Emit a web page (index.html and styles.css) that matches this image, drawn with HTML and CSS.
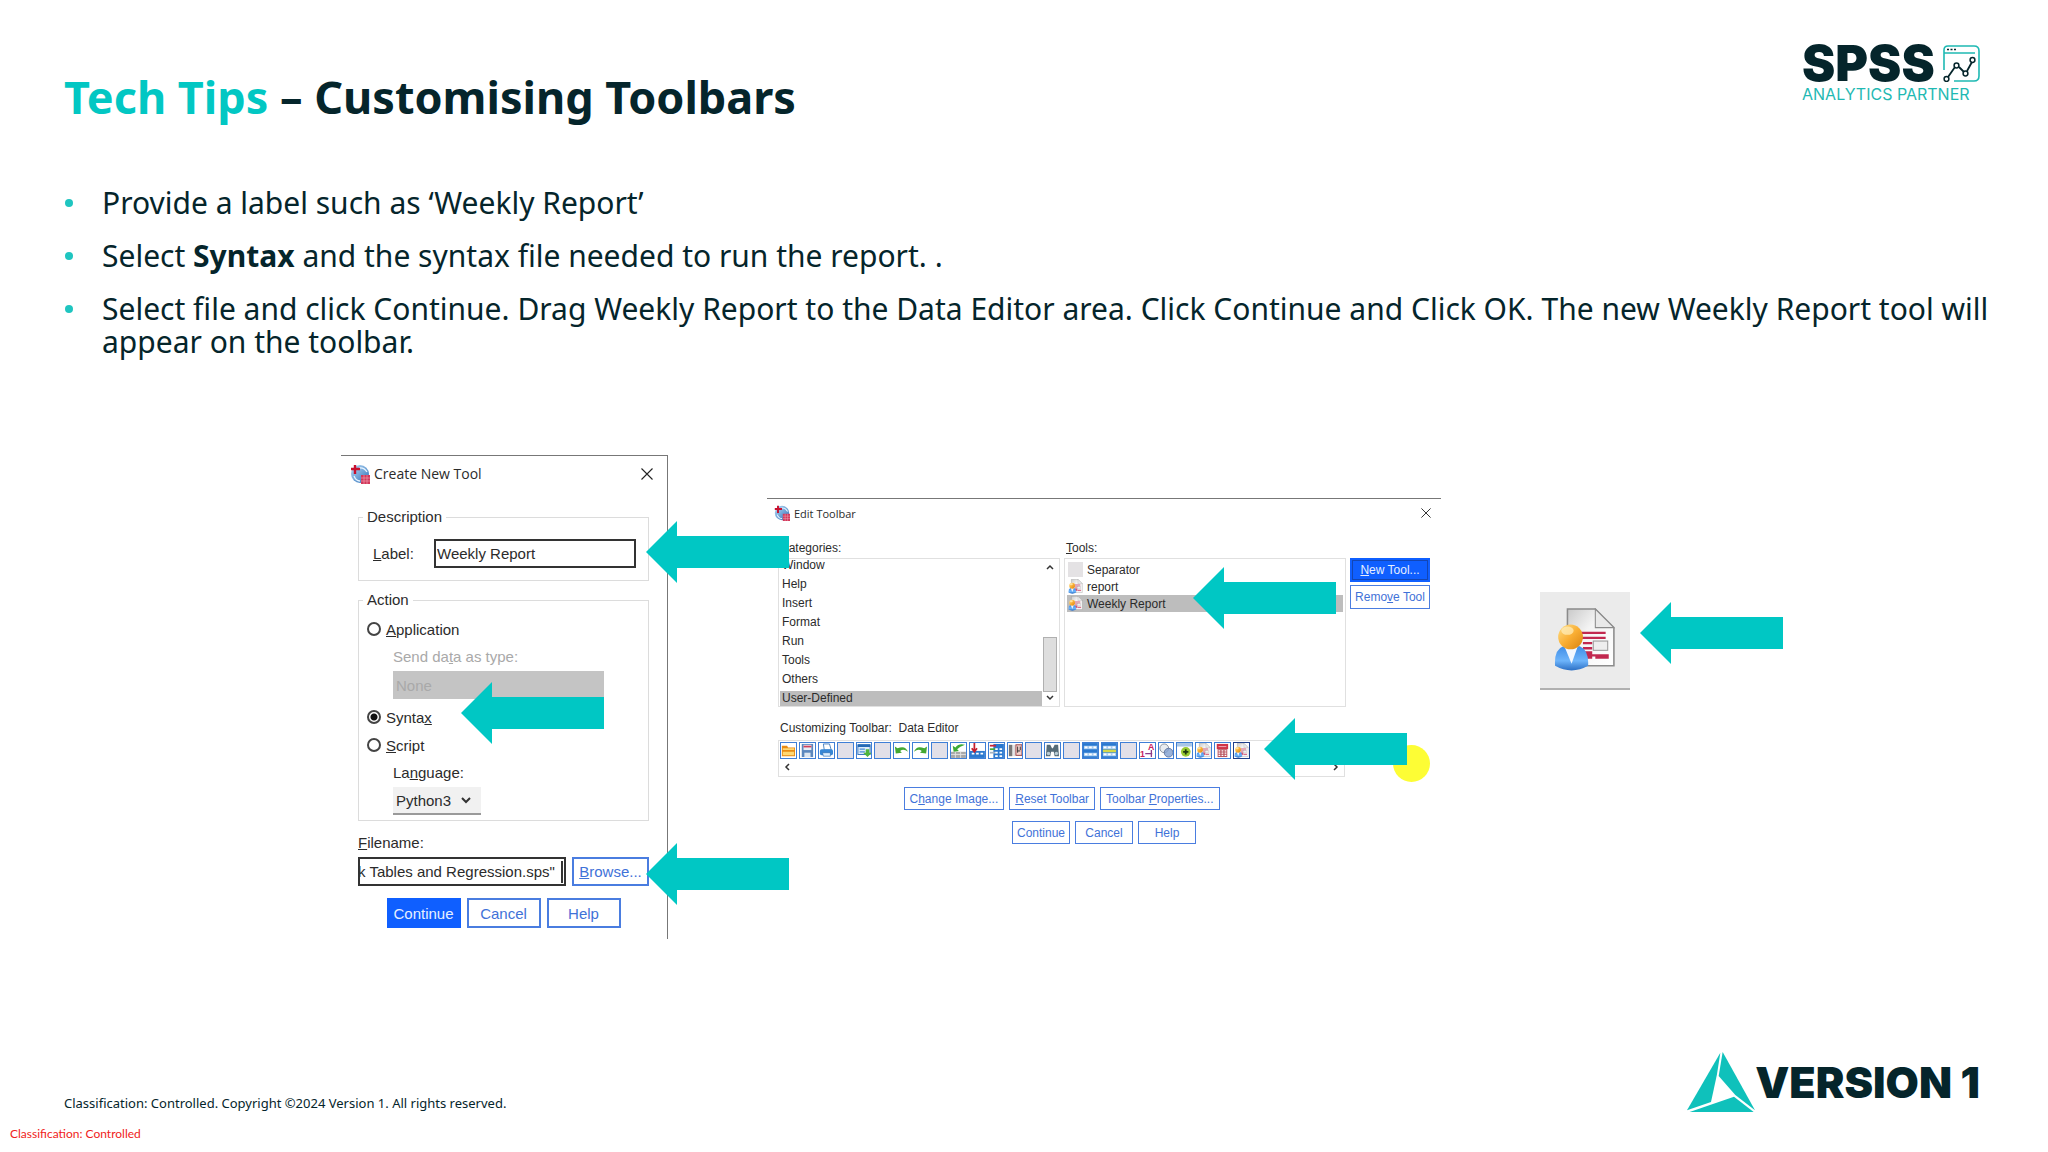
FILE: index.html
```html
<!DOCTYPE html>
<html lang="en">
<head>
    <meta charset="UTF-8">
    <meta name="viewport" content="width=device-width, initial-scale=1.0">
    <title>Tech Tips – Customising Toolbars</title>
    <link rel="stylesheet" href="styles.css">
</head>
<body>
    <!-- shared icons -->
    <svg class="defs" width="0" height="0" aria-hidden="true">
        <defs>
            <linearGradient id="gHead" x1="0" y1="0" x2="1" y2="1">
                <stop offset="0" stop-color="#ffe08a"/>
                <stop offset="0.5" stop-color="#f9ae33"/>
                <stop offset="1" stop-color="#d9820f"/>
            </linearGradient>
            <linearGradient id="gBody" x1="0" y1="0" x2="0" y2="1">
                <stop offset="0" stop-color="#3f8de6"/>
                <stop offset="0.6" stop-color="#6db4fb"/>
                <stop offset="1" stop-color="#2c6fc4"/>
            </linearGradient>
            <linearGradient id="gPage" x1="0" y1="0" x2="1" y2="1">
                <stop offset="0" stop-color="#c9c9c9"/>
                <stop offset="0.4" stop-color="#f4f4f4"/>
                <stop offset="1" stop-color="#ffffff"/>
            </linearGradient>
            <linearGradient id="gGlobe" x1="0" y1="0" x2="1" y2="1">
                <stop offset="0" stop-color="#b9dcf7"/>
                <stop offset="1" stop-color="#2d6fb8"/>
            </linearGradient>
        </defs>
        <symbol id="arrow" viewBox="0 0 143 62">
            <polygon points="0,31 31,0 31,15 143,15 143,47 31,47 31,62"/>
        </symbol>
        <symbol id="close" viewBox="0 0 12 12">
            <path d="M.5 .5l11 11M11.5 .5l-11 11" fill="none" stroke="#222" stroke-width="1.1"/>
        </symbol>
        <symbol id="app" viewBox="0 0 20 20">
            <circle cx="10" cy="10" r="9" fill="url(#gGlobe)"/>
            <path d="M9 4q5-1 8 4M4 12q2 5 6 5" stroke="#e8f4ff" stroke-width="1.3" fill="none"/>
            <path d="M5 1v9M1 5h9" stroke="#c8102e" stroke-width="2.4"/>
            <rect x="11" y="11" width="9" height="9" fill="#d2385a"/>
            <path d="M11 14h9M11 17h9M14 11v9M17 11v9" stroke="#f2a8b8" stroke-width=".6"/>
        </symbol>
        <symbol id="user-report" viewBox="0 0 60 62">
            <path d="M13 1h27l18 18v37H13z" fill="url(#gPage)" stroke="#8b8b8b" stroke-width="1.5"/>
            <path d="M40 1v18h18z" fill="#e9e9e9" stroke="#8b8b8b"/>
            <path d="M26 24h24M26 29h24M28 34h9M28 39h9M28 43h9M26 48h11M40 48h13M28 44h9M28 46h25" stroke="#c2284f" stroke-width="2.2" fill="none"/>
            <rect x="38" y="32" width="14" height="9" fill="#eee" stroke="#999"/>
            <path d="M1 56Q0 40 9 37h16q9 4 8 19-16 9-32 0z" fill="url(#gBody)"/>
            <path d="M10 37h13l-6 17z" fill="#f3f8ff"/>
            <circle cx="16" cy="28" r="12" fill="url(#gHead)"/>
            <ellipse cx="13" cy="22" rx="6" ry="4" fill="#ffefbf" opacity=".7"/>
        </symbol>
        <symbol id="grid-blue" viewBox="0 0 17 17">
            <rect width="17" height="17" fill="#2a78cf"/>
            <path d="M1 5h15M1 13h15" stroke="#a9cdf2" stroke-width="4"/>
            <path d="M2 5h3M7 5h3M12 5h3M2 13h3M7 13h3M12 13h3" stroke="#ffffff" stroke-width="2"/>
        </symbol>
        <symbol id="undo" viewBox="0 0 17 17">
            <path d="M1 4l1 8 7-1-2-2q4-3 9 1-3-8-12-4z" fill="#43a832"/>
        </symbol>
    </svg>

    <main class="slide">
        <header class="slide-header">
            <h1><span>Tech Tips</span> – Customising Toolbars</h1>
            <div class="partner-logo">
                <div class="partner-top">
                    <span>SPSS</span>
                    <svg width="37" height="37" viewBox="0 0 37 37" fill="none">
                        <path d="M1 15v-10q0-4 4-4h26q5 0 5 5v25q0 5-5 5H11M1 8h31M1 12v13" stroke="#1fb9b3" stroke-width="1.6"/>
                        <path d="M4 4.500h2M7.500 4.500h2M11 4.500h2" stroke="#05252b" stroke-width="1.4"/>
                        <path d="M5 32l7-10M16 22l5 5M24 26l5-9" stroke="#05252b" stroke-width="1.8"/>
                        <circle cx="3.500" cy="34" r="2.400" stroke="#05252b" stroke-width="1.5"/>
                        <circle cx="13.500" cy="20.500" r="2.400" stroke="#05252b" stroke-width="1.5"/>
                        <circle cx="22.500" cy="28.500" r="2.400" stroke="#05252b" stroke-width="1.5"/>
                        <circle cx="29.500" cy="15" r="2.400" stroke="#05252b" stroke-width="1.5"/>
                    </svg>
                </div>
                <div class="partner-sub">ANALYTICS PARTNER</div>
            </div>
        </header>

        <ul class="steps">
            <li>Provide a label such as ‘Weekly Report’</li>
            <li>Select <b>Syntax</b> and the syntax file needed to run the report. .</li>
            <li>Select file and click Continue. Drag Weekly Report to the Data Editor area. Click Continue and Click OK. The new Weekly Report tool will appear on the toolbar.</li>
        </ul>

        <section class="stage">
            <form class="dialog create-tool">
                <div class="titlebar">
                    <svg width="20" height="20"><use href="#app"/></svg>
                    <h2>Create New Tool</h2>
                    <button type="button" class="close" aria-label="Close"><svg width="12" height="12"><use href="#close"/></svg></button>
                </div>
                <fieldset class="description">
                    <legend>Description</legend>
                    <div class="label-row">
                        <label for="toolLabel"><u>L</u>abel:</label>
                        <input type="text" id="toolLabel" class="field" value="Weekly Report">
                    </div>
                </fieldset>
                <fieldset class="action">
                    <legend>Action</legend>
                    <label class="radio"><input type="radio" name="action"><span><u>A</u>pplication</span></label>
                    <div class="sub disabled">
                        <label for="dataType">Send da<u>t</u>a as type:</label>
                        <select id="dataType" disabled><option>None</option></select>
                    </div>
                    <label class="radio syntax"><input type="radio" name="action" checked><span>Synta<u>x</u></span></label>
                    <label class="radio"><input type="radio" name="action"><span><u>S</u>cript</span></label>
                    <div class="sub">
                        <label for="language">La<u>n</u>guage:</label>
                        <select id="language" class="language"><option>Python3</option></select>
                    </div>
                </fieldset>
                <label class="file-label" for="filename"><u>F</u>ilename:</label>
                <div class="file-row">
                    <div class="file-box">
                        <input type="text" id="filename" value="k Tables and Regression.sps&quot;">
                    </div>
                    <button type="button" class="btn"><u>B</u>rowse...</button>
                </div>
                <div class="actions">
                    <button type="button" class="btn primary">Continue</button>
                    <button type="button" class="btn">Cancel</button>
                    <button type="button" class="btn">Help</button>
                </div>
                <svg class="arrow to-label"><use href="#arrow"/></svg>
                <svg class="arrow to-syntax"><use href="#arrow"/></svg>
                <svg class="arrow to-browse"><use href="#arrow"/></svg>
            </form>

            <form class="dialog edit-toolbar">
                <div class="titlebar">
                    <svg width="16" height="16"><use href="#app"/></svg>
                    <h2>Edit Toolbar</h2>
                    <button type="button" class="close" aria-label="Close"><svg width="10" height="10"><use href="#close"/></svg></button>
                </div>
                <div class="dialog-body">
                    <div class="columns">
                        <div class="column">
                            <label for="categories"><u>C</u>ategories:</label>
                            <div class="list categories">
                                <select id="categories" size="8">
                                    <option>Window</option>
                                    <option>Help</option>
                                    <option>Insert</option>
                                    <option>Format</option>
                                    <option>Run</option>
                                    <option>Tools</option>
                                    <option>Others</option>
                                    <option selected>User-Defined</option>
                                </select>
                                <div class="scrollbar">
                                    <svg width="8" height="6" viewBox="0 0 8 6"><path d="M1 5l3-3 3 3"/></svg>
                                    <div class="thumb"></div>
                                    <svg width="8" height="6" viewBox="0 0 8 6"><path d="M1 1l3 3 3-3"/></svg>
                                </div>
                            </div>
                        </div>
                        <div class="column">
                            <div class="column-label" id="toolsLabel"><u>T</u>ools:</div>
                            <ul class="list tools" role="listbox" aria-labelledby="toolsLabel">
                                <li role="option"><span class="separator"></span>Separator</li>
                                <li role="option"><svg width="15" height="15"><use href="#user-report"/></svg>report</li>
                                <li role="option" aria-selected="true" class="selected"><svg width="15" height="15"><use href="#user-report"/></svg>Weekly Report</li>
                            </ul>
                        </div>
                        <div class="side-buttons">
                            <button type="button" class="btn primary"><u>N</u>ew Tool...</button>
                            <button type="button" class="btn">Remo<u>v</u>e Tool</button>
                        </div>
                    </div>
                    <div class="customizing">Customizing Toolbar:&nbsp; Data Editor</div>
                    <div class="toolbar">
                        <div class="toolbar-icons">
                            <button type="button" aria-label="Open"><svg viewBox="0 0 17 17"><path d="M1 3h6l1 2h8v10H1z" fill="#e98b12"/><path d="M2 6h13v2H2zM2 10h13v4H2z" fill="#ffd873"/></svg></button>
                            <button type="button" aria-label="Save"><svg viewBox="0 0 17 17"><rect x="2" y="1" width="13" height="15" fill="#5b87bd"/><rect x="4" y="2" width="9" height="6" fill="#e8edf4"/><path d="M4 4h9" stroke="#d0405a" stroke-width="2"/><rect x="5" y="11" width="7" height="5" fill="#dde6f0"/></svg></button>
                            <button type="button" aria-label="Print"><svg viewBox="0 0 17 17"><path d="M5 1h7l2 7H6z" fill="#fff" stroke="#3976b8"/><rect x="1" y="7" width="15" height="7" rx="2" fill="#3687d6"/><path d="M4 11h9v4H5z" fill="#dceeff" stroke="#2a66a8" stroke-width=".7"/></svg></button>
                            <span class="gap"></span>
                            <button type="button" aria-label="Recall dialogs"><svg viewBox="0 0 17 17"><rect x="1" y="2" width="14" height="11" fill="#dcebfa" stroke="#2469b5"/><path d="M1 3h14" stroke="#2469b5" stroke-width="3"/><path d="M3 7h6M3 10h6" stroke="#4b8dd4" stroke-width="1.5"/><path d="M10 7h4v4h3l-5 5-5-5h3z" fill="#4fb53a"/></svg></button>
                            <span class="gap"></span>
                            <button type="button" aria-label="Undo"><svg viewBox="0 0 17 17"><use href="#undo"/></svg></button>
                            <button type="button" aria-label="Redo"><svg viewBox="0 0 17 17"><use href="#undo" transform="matrix(-1 0 0 1 17 0)"/></svg></button>
                            <span class="gap"></span>
                            <button type="button" aria-label="Go to case"><svg viewBox="0 0 17 17"><rect y="10" width="17" height="7" fill="#a8a8a8"/><path d="M0 13h17M5 10v7M11 10v7" stroke="#e5e5e5"/><path d="M2 3l1 7 6-1-2-2q3-3 9-5-7-2-11 3z" fill="#3cab35"/></svg></button>
                            <button type="button" aria-label="Go to variable"><svg viewBox="0 0 17 17"><rect y="9" width="17" height="8" fill="#2a78cf"/><path d="M2 11h3v2H2zM7 11h3v2H7zM12 11h3v2h-3z" fill="#fff"/><path d="M5 0v9M2 6l3 4 3-4" fill="none" stroke="#c41f2f" stroke-width="2"/></svg></button>
                            <button type="button" aria-label="Variables"><svg viewBox="0 0 17 17"><rect x="5" y="1" width="12" height="16" fill="#2a78cf"/><path d="M7 6h3v2H7zM12 6h3v2h-3zM7 10h3v2H7zM12 10h3v2h-3zM7 14h3v2H7zM12 14h3v2h-3z" fill="#fff"/><path d="M1 3h7" stroke="#cc2537" stroke-width="2"/><path d="M1 7h6" stroke="#45a738" stroke-width="2"/><path d="M1 11h6" stroke="#a4b3c4" stroke-width="2"/></svg></button>
                            <button type="button" aria-label="Run statistics"><svg viewBox="0 0 17 17"><rect x="1" y="2" width="4" height="13" fill="#777"/><rect x="6" y="2" width="2" height="13" fill="#ddd"/><rect x="9" y="2" width="7" height="12" fill="#f3d2cc" stroke="#8b2d32"/><path d="M11 4v7M14 4v4M11 9h3" stroke="#222"/></svg></button>
                            <span class="gap"></span>
                            <button type="button" aria-label="Find"><svg viewBox="0 0 17 17"><path d="M2 2h4l2 4h1l2-4h4l1 13h-5l-1-5H7l-1 5H1z" fill="#566c78"/><circle cx="4" cy="12" r="2" fill="#b9cbd3"/><circle cx="13" cy="12" r="2" fill="#b9cbd3"/></svg></button>
                            <span class="gap"></span>
                            <button type="button" aria-label="Insert cases"><svg viewBox="0 0 17 17"><use href="#grid-blue"/></svg></button>
                            <button type="button" aria-label="Insert variable"><svg viewBox="0 0 17 17"><use href="#grid-blue"/><path d="M1 9h15" stroke="#d5d84a" stroke-width="3"/></svg></button>
                            <span class="gap"></span>
                            <button type="button" aria-label="Value labels"><svg viewBox="0 0 17 17"><text x="9" y="8" class="glyph">A</text><text x="0" y="16" class="glyph">1</text><path d="M6 12h8M13 8v8" stroke="#8b3b8b" stroke-width="1.5"/></svg></button>
                            <button type="button" aria-label="Use sets"><svg viewBox="0 0 17 17"><circle cx="6" cy="6" r="5" fill="#e8ecf1" stroke="#7e8792"/><circle cx="11" cy="11" r="5" fill="#7f9fd0" fill-opacity=".8" stroke="#5d74a0"/></svg></button>
                            <button type="button" aria-label="Show all"><svg viewBox="0 0 17 17"><rect width="17" height="4" fill="#a9c6e6"/><circle cx="10" cy="10" r="5.5" fill="#9acb35"/><path d="M10 7v6M7 10h6" stroke="#1d3a10" stroke-width="2"/></svg></button>
                            <button type="button" aria-label="report"><svg viewBox="0 0 60 62"><use href="#user-report"/></svg></button>
                            <button type="button" aria-label="Calculator"><svg viewBox="0 0 17 17"><rect x="2" y="1" width="13" height="6" fill="#cf3448"/><path d="M4 4h9" stroke="#f1b9bf" stroke-width="1"/><rect x="3" y="7" width="11" height="9" fill="#b9545f"/><path d="M4 9h9M4 11.500h9M4 14h9" stroke="#fff" stroke-width="1.3" stroke-dasharray="2 1.5"/></svg></button>
                            <button type="button" aria-label="Weekly Report" class="current"><svg viewBox="0 0 60 62"><use href="#user-report"/></svg></button>
                        </div>
                        <div class="toolbar-scroll">
                            <svg width="6" height="8" viewBox="0 0 6 8"><path d="M5 1L2 4l3 3"/></svg>
                            <svg width="6" height="8" viewBox="0 0 6 8"><path d="M1 1l3 3-3 3"/></svg>
                        </div>
                    </div>
                    <div class="actions toolbar-actions">
                        <button type="button" class="btn">C<u>h</u>ange Image...</button>
                        <button type="button" class="btn"><u>R</u>eset Toolbar</button>
                        <button type="button" class="btn">Toolbar <u>P</u>roperties...</button>
                    </div>
                    <div class="actions">
                        <button type="button" class="btn">Continue</button>
                        <button type="button" class="btn">Cancel</button>
                        <button type="button" class="btn">Help</button>
                    </div>
                </div>
                <span class="pointer"></span>
                <svg class="arrow to-tool"><use href="#arrow"/></svg>
                <svg class="arrow to-toolbar"><use href="#arrow"/></svg>
            </form>

            <div class="result">
                <div class="tile"><svg width="62" height="64" viewBox="0 0 60 62" role="img" aria-label="Weekly Report tool"><use href="#user-report"/></svg></div>
                <svg class="arrow-inline"><use href="#arrow"/></svg>
            </div>
        </section>

        <footer class="slide-footer">
            <p>Classification: Controlled. Copyright ©2024 Version 1. All rights reserved.</p>
            <div class="company-logo">
                <svg width="68" height="60" viewBox="0 0 204 180" fill="#0fc1bb">
                    <path d="M100 2L0 175l72-25 18-83z"/>
                    <path d="M107 0l97 175-59-46-50-57z"/>
                    <path d="M8 180l133-46 59 46z"/>
                </svg>
                <span>VERSION 1</span>
            </div>
        </footer>
    </main>
    <p class="classification">Classification: Controlled</p>
</body>
</html>
```
FILE: styles.css
```css
* {
    box-sizing: border-box;
}

body {
    margin: 0;
    min-height: 100vh;
    display: flex;
    flex-direction: column;
    background: #ffffff;
    color: #05252b;
    font-family: "Noto Sans", sans-serif;
}

h1, h2, p, ul, fieldset {
    margin: 0;
    padding: 0;
}

.defs {
    position: absolute;
}

svg {
    display: block;
    flex: none;
}

.slide {
    flex: 1;
    display: flex;
    flex-direction: column;
    padding: 42px 54px 0 64px;
}

/* header */
.slide-header {
    display: flex;
    justify-content: space-between;
    align-items: flex-start;
    padding-right: 14px;
}

.slide-header h1 {
    padding-top: 22px;
    font-size: 45px;
    line-height: 66px;
    font-weight: 700;
}

.slide-header h1 span {
    color: #02c7c3;
}

.partner-logo {
    width: 178px;
}

.partner-top {
    display: flex;
    align-items: center;
    justify-content: space-between;
    font: 900 50px/42px Inter, sans-serif;
}

.partner-sub {
    color: #1fb9b3;
    font: 400 16px/20px Inter, sans-serif;
}

/* bullets */
.steps {
    list-style: none;
    display: flex;
    flex-direction: column;
    gap: 20px;
    padding-top: 56px;
    font-size: 30px;
    line-height: 33px;
}

.steps li {
    position: relative;
    padding-left: 38px;
}

.steps li::before {
    content: "";
    position: absolute;
    left: 1px;
    top: 13px;
    width: 8px;
    height: 8px;
    border-radius: 50%;
    background: #1fc5c0;
}

/* dialogs */
.stage {
    display: flex;
    align-items: flex-start;
    gap: 99px;
    margin-left: 277px;
    padding-top: 97px;
}

.dialog {
    position: relative;
    flex: none;
    border-top: 1px solid #777777;
    color: #2b2b2b;
    font: 15px "Liberation Sans", sans-serif;
}

.titlebar {
    display: flex;
    align-items: center;
}

.titlebar h2 {
    flex: 1;
    font-family: "Open Sans", sans-serif;
    font-weight: 400;
}

button,
input,
select {
    font: inherit;
    color: inherit;
}

.close {
    border: none;
    background: none;
    padding: 0;
}

.btn {
    border: 2px solid #4a7de0;
    background: #ffffff;
    color: #3f72d8;
    padding: 0;
    white-space: nowrap;
}

.btn.primary {
    background: #0f5fff;
    border-color: #0f5fff;
    color: #e6efff;
}

.actions {
    display: flex;
    justify-content: center;
}

.create-tool {
    width: 327px;
    padding: 0 18px 11px 17px;
    border-right: 1px solid #777777;
}

.create-tool .titlebar {
    height: 35px;
    margin: 0 -4px 17px -8px;
    gap: 4px;
}

.create-tool h2 {
    font-size: 14px;
}

fieldset {
    min-width: 0;
    border: 1px solid #dcdcdc;
}

legend {
    margin-left: -4px;
    padding: 0 4px;
    line-height: 18px;
}

.description {
    padding: 13px 12px 12px 14px;
}

.description legend {
    margin-left: -10px;
}

.label-row {
    display: flex;
    align-items: center;
    justify-content: space-between;
}

.field {
    width: 202px;
    height: 29px;
    border: 2px solid #333333;
    padding: 0 1px;
    background: #ffffff;
}

.action {
    margin-top: 10px;
    padding: 6px 8px 5px;
}

.radio {
    display: flex;
    align-items: center;
    gap: 5px;
    height: 28px;
}

.radio.syntax {
    margin-top: 4px;
}

.radio input {
    appearance: none;
    width: 14px;
    height: 14px;
    margin: 0;
    border: 2px solid #444444;
    border-radius: 50%;
}

.radio input:checked {
    background: radial-gradient(circle, #111111 3px, #ffffff 4px);
}

.sub {
    padding-left: 26px;
}

.sub label,
.file-label {
    display: block;
    line-height: 28px;
}

.sub select {
    display: block;
    appearance: none;
    width: 211px;
    height: 28px;
    border: none;
    border-radius: 0;
    padding: 0 3px;
    background-color: #c4c4c4;
    opacity: 1;
}

.disabled {
    color: #a9a9a9;
}

.sub .language {
    width: 88px;
    background: #f1f1f1 url("data:image/svg+xml,%3Csvg xmlns='http://www.w3.org/2000/svg' width='10' height='7'%3E%3Cpath d='M1 1l4 4 4-4' fill='none' stroke='%23333' stroke-width='2'/%3E%3C/svg%3E") no-repeat right 10px center;
    border-bottom: 2px solid #9a9a9a;
}

.file-label {
    margin-top: 8px;
}

.file-row {
    display: flex;
    gap: 6px;
    height: 29px;
}

.file-box {
    display: flex;
    align-items: center;
    width: 208px;
    border: 2px solid #333333;
    padding-right: 1px;
}

.file-box::after {
    content: "";
    width: 2px;
    height: 22px;
    background: #333333;
}

.file-box input {
    flex: 1;
    min-width: 0;
    border: none;
    padding: 0;
    background: none;
    text-indent: -2px;
}

.file-row .btn {
    flex: 1;
}

.create-tool .actions {
    gap: 6px;
    padding-top: 12px;
}

.create-tool .actions .btn {
    width: 74px;
    height: 30px;
}

.edit-toolbar {
    width: 674px;
    margin-top: 43px;
    font-size: 12px;
}

.edit-toolbar .titlebar {
    height: 28px;
    padding: 0 10px 0 7px;
    gap: 4px;
}

.edit-toolbar h2 {
    font-size: 11px;
}

.dialog-body {
    padding: 11px;
}

.columns {
    display: flex;
    gap: 4px;
}

.column {
    width: 282px;
}

.column label,
.column-label,
.customizing {
    display: block;
    padding-left: 2px;
    line-height: 20px;
}

.list {
    height: 149px;
    border: 1px solid #e0e0e0;
}

.categories {
    display: flex;
    overflow: hidden;
}

.categories select {
    flex: 1;
    appearance: none;
    height: 152px;
    margin-top: -1px;
    border: none;
    padding: 0 1px;
    overflow: hidden;
    background: none;
    outline: none;
}

.categories option {
    min-height: 19px;
    padding: 0 2px;
    line-height: 19px;
}

.categories option:checked {
    background: linear-gradient(#bdbdbd, #bdbdbd);
    color: #2b2b2b;
}

.scrollbar {
    display: flex;
    flex-direction: column;
    justify-content: space-between;
    align-items: center;
    width: 14px;
    margin-right: 2px;
    padding: 5px 0;
}

.scrollbar path,
.toolbar-scroll path {
    fill: none;
    stroke: #333333;
    stroke-width: 1.5;
}

.thumb {
    width: 14px;
    height: 55px;
    margin-top: auto;
    margin-bottom: 3px;
    border: 1px solid #b0b0b0;
    background: #dedede;
}

.tools {
    list-style: none;
    padding: 2px;
}

.tools li {
    display: flex;
    align-items: center;
    gap: 4px;
    height: 17px;
    padding-left: 1px;
}

.separator {
    width: 15px;
    height: 15px;
    background: #e4e2e4;
}

.tools .selected {
    background: #bdbdbd;
}

.side-buttons {
    display: flex;
    flex-direction: column;
    gap: 3px;
    width: 80px;
    padding-top: 20px;
}

.side-buttons .btn {
    height: 24px;
}

.side-buttons .primary {
    outline: 1px solid #1346b4;
    outline-offset: -3px;
}

.edit-toolbar .btn {
    border-width: 1px;
}

.customizing {
    margin-top: 11px;
}

.toolbar {
    width: 567px;
    height: 37px;
    margin-top: 2px;
    padding: 1px;
    border: 1px solid #e0e0e0;
}

.toolbar-icons {
    display: grid;
    grid-template-columns: repeat(25, 1fr);
    gap: 2px;
    width: 470px;
}

.toolbar-icons button,
.gap {
    height: 17px;
    padding: 0;
    border: 1px solid #3f7fd6;
    background: #ffffff;
}

.toolbar-icons .gap {
    background: #e2e0e8;
}

.toolbar-icons .current {
    border-color: #1f3f8a;
}

.toolbar-icons svg {
    width: 100%;
    height: 100%;
}

.glyph {
    font: 700 10px "Liberation Sans", sans-serif;
    fill: #c8205e;
}

.toolbar-scroll {
    display: flex;
    justify-content: space-between;
    padding: 4px 4px 0;
}

.edit-toolbar .actions {
    gap: 5px;
    margin-top: 11px;
}

.edit-toolbar .actions .btn {
    width: 58px;
    height: 23px;
}

.edit-toolbar .toolbar-actions {
    width: 567px;
    margin-top: 10px;
}

.edit-toolbar .toolbar-actions .btn {
    width: auto;
    padding: 0 5px;
}

/* callout arrows laid over the dialogs */
.arrow,
.arrow-inline {
    width: 143px;
    height: 62px;
    fill: #00c7c4;
}

.arrow {
    position: absolute;
    z-index: 2;
}

.to-label {
    left: 305px;
    top: 65px;
}

.to-syntax {
    left: 120px;
    top: 226px;
}

.to-browse {
    left: 305px;
    top: 387px;
}

.to-tool {
    left: 426px;
    top: 68px;
}

.to-toolbar {
    left: 497px;
    top: 219px;
}

.pointer {
    position: absolute;
    left: 626px;
    top: 246px;
    width: 37px;
    height: 37px;
    border-radius: 50%;
    background: #fdfd35;
}

.result {
    display: flex;
    align-items: center;
    gap: 10px;
    margin-top: 137px;
}

.tile {
    display: flex;
    align-items: center;
    justify-content: center;
    width: 90px;
    height: 98px;
    border-bottom: 2px solid #b0b0b0;
    background: #ebebeb;
}

.result .arrow-inline {
    margin-bottom: 16px;
}

/* footer */
.slide-footer {
    display: flex;
    justify-content: space-between;
    align-items: flex-end;
    margin-top: auto;
    padding-right: 14px;
    font-size: 13px;
    line-height: 18px;
}

.company-logo {
    display: flex;
    align-items: center;
    font: 900 43px/60px Inter, sans-serif;
}

.classification {
    padding: 12px 10px 8px;
    color: #f01c20;
    font: 12px/20px Lato, sans-serif;
}
```
